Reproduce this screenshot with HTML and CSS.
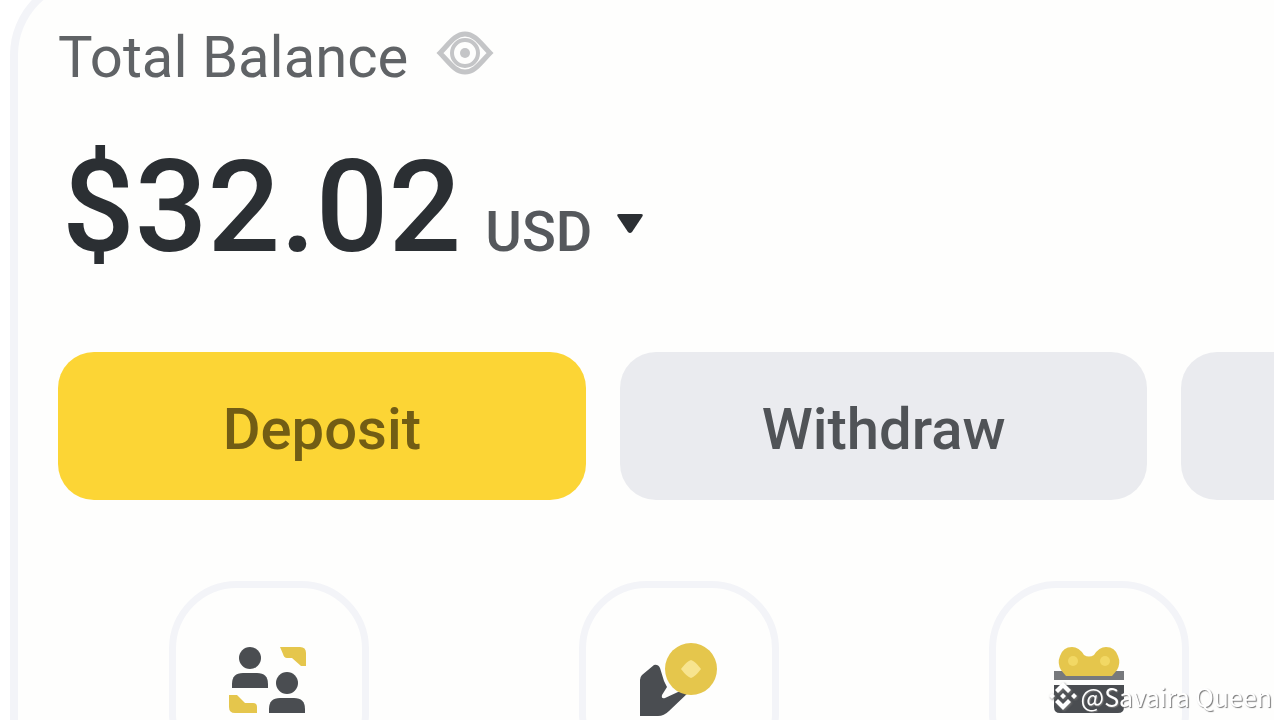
FILE: index.html
```html
<!DOCTYPE html>
<html lang="en">
<head>
    <meta charset="UTF-8">
    <meta name="viewport" content="width=device-width, initial-scale=1.0">
    <title>Total Balance</title>
    <link rel="stylesheet" href="styles.css">
</head>
<body>

<main class="wallet">
    <div class="balance-label">
        <span>Total Balance</span>
        <button class="toggle-balance" aria-label="Hide balance">
            <svg width="58" height="46" viewBox="0 0 58 46" fill="none" stroke="#c4c5c7">
                <path d="M4 23C13 14 19 4 29 4s16 10 25 19C45 32 39 42 29 42S13 32 4 23z" stroke-width="5"/>
                <circle cx="29" cy="23" r="13" stroke-width="4"/>
                <circle cx="29" cy="23" r="5" fill="#c4c5c7" stroke="none"/>
            </svg>
        </button>
    </div>

    <div class="balance">
        <span class="amount">$32.02</span>
        <button class="currency">
            USD
            <svg width="28" height="20" viewBox="0 0 28 20" fill="#2b2f33">
                <path d="M3 0h22q3 0 1 3L16 18q-2 2-4 0L2 3q-2-3 1-3z"/>
            </svg>
        </button>
    </div>

    <div class="actions">
        <button class="action primary">Deposit</button>
        <button class="action">Withdraw</button>
        <button class="action" aria-label="Transfer"></button>
    </div>

    <div class="shortcuts">
        <button class="tile" aria-label="P2P trading">
            <svg width="84" height="76" viewBox="0 0 84 76">
                <g fill="#4a4d51">
                    <circle cx="23" cy="15" r="11"/>
                    <path d="M5 45v-4q0-11 11-11h14q11 0 11 11v4z"/>
                    <circle cx="60" cy="40" r="11"/>
                    <path d="M42 70v-4q0-11 11-11h14q11 0 11 11v4z"/>
                </g>
                <g fill="#e5c64c">
                    <path d="M53 4h20q6 0 6 6v13h-5L65 15H60q-3 0-4-4z"/>
                    <path d="M2 52h8l8 8h8q4 0 4 4v6H8q-6 0-6-6z"/>
                </g>
            </svg>
        </button>
        <button class="tile" aria-label="Earn">
            <svg width="84" height="76" viewBox="0 0 84 76">
                <path d="M3 73V37q0-3 2-5l12-10q4-1 6 3l4 13 3 6-5 8q-1 4 3 3l13-6 12-1-21 20q-5 5-11 5H6z" fill="#4a4d51"/>
                <circle cx="54" cy="26" r="26" fill="#e5c64c"/>
                <path d="M54 17q4 1 10 9-6 8-10 9-4-1-10-9 6-8 10-9z" fill="#f7e48f"/>
            </svg>
        </button>
        <button class="tile" aria-label="Rewards">
            <svg width="84" height="76" viewBox="0 0 84 76">
                <path d="M7 28h70v9H7z" fill="#77797c"/>
                <path d="M7 42h70v22q0 6-6 6H13q-6 0-6-6z" fill="#4a4d51"/>
                <path d="M14 27q-4-7-1-14 3-9 12-9 7 0 12 8 5 3 10 0 5-8 12-8 9 0 12 9 3 7-1 14l-5 6H19z" fill="#e5c64c"/>
                <circle cx="26" cy="18" r="5" fill="#f2d864"/>
                <circle cx="58" cy="18" r="5" fill="#f2d864"/>
            </svg>
        </button>
    </div>
</main>

<div class="watermark">
    <svg width="28" height="28" viewBox="0 0 28 28" fill="#fff">
        <path d="M14 0l8 8-3 3-5-5-5 5-3-3z"/>
        <path d="M14 28l8-8-3-3-5 5-5-5-3 3z"/>
        <path d="M14 11l3 3-3 3-3-3zM3 11l3 3-3 3-3-3zM25 11l3 3-3 3-3-3z"/>
    </svg>
    <span>@Savaira Queen</span>
</div>

</body>
</html>
```
FILE: styles.css
```css
body {
    font-family: Roboto, 'Liberation Sans', sans-serif;
    margin: 0;
    height: 100vh;
    overflow: hidden;
    background-color: #fff;
    color: #2b2f33;
}

button {
    font-family: inherit;
    color: inherit;
    border: none;
    padding: 0;
    background: none;
    cursor: pointer;
}

svg {
    display: block;
}

.wallet {
    margin: -25px 6px 0 10px;
    padding: 42px 0 40px 40px;
    border: 8px solid #f3f4f8;
    border-right: none;
    border-radius: 80px 0 0 0;
    background-color: #fefefd;
    overflow: hidden;
}

.balance-label {
    display: flex;
    align-items: center;
    gap: 28px;
    height: 64px;
    font-size: 58px;
    line-height: 64px;
    color: #606366;
}

.toggle-balance {
    padding-bottom: 8px;
}

.balance {
    display: flex;
    align-items: baseline;
    gap: 24px;
    margin: 54px 0 81px;
    padding-left: 4px;
    line-height: 128px;
}

.amount {
    font-size: 128px;
    font-weight: 500;
}

.currency {
    display: flex;
    align-items: center;
    gap: 24px;
    font-size: 56px;
    font-weight: 500;
    line-height: 64px;
    color: #55585c;
}

.currency svg {
    margin-bottom: 16px;
}

.actions {
    display: grid;
    grid-auto-flow: column;
    grid-auto-columns: 43.4%;
    gap: 34px;
}

.action {
    height: 148px;
    padding-top: 6px;
    border-radius: 36px;
    background-color: #eaebef;
    font-size: 58px;
    font-weight: 500;
    color: #505357;
}

.primary {
    background-color: #fcd535;
    color: #725d14;
}

.shortcuts {
    display: grid;
    grid-template-columns: repeat(3, 33.9%);
    justify-items: center;
    margin-top: 81px;
    padding-left: 6px;
}

.tile {
    display: flex;
    align-items: center;
    justify-content: center;
    box-sizing: border-box;
    width: 200px;
    height: 200px;
    border: 7px solid #f3f4f8;
    border-radius: 68px;
}

.watermark {
    position: fixed;
    right: 8px;
    bottom: 6px;
    display: flex;
    align-items: center;
    gap: 4px;
    font-family: 'Noto Sans CJK SC', 'Noto Sans', sans-serif;
    font-size: 25px;
    line-height: 36px;
    color: #fff;
    text-shadow: 1px 1px 1px #777;
}

.watermark svg {
    filter: drop-shadow(1px 1px 1px #777);
}
```
